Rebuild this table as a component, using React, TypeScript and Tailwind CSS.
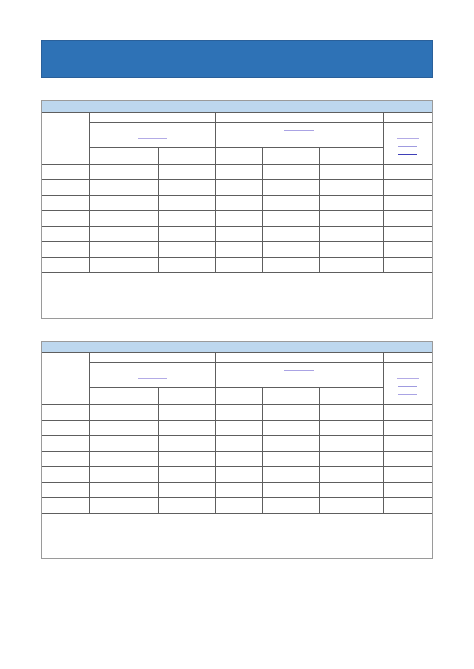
import React from "react";

const cell = "border border-[#5e5e5e] p-0";

function Line({ w, color, className = "" }: { w: string; color: string; className?: string }) {
  return <div className={`h-px mx-auto ${w} ${color} ${className}`} />;
}

function DataTable({ visited }: { visited: boolean }) {
  const rows = [0, 1, 2, 3, 4, 5, 6];
  return (
    <div className="border border-[#9a9a9a] w-[392px]">
      <table className="border-collapse border-hidden table-fixed w-[390px]">
        <colgroup>
          <col className="w-[47px]" />
          <col className="w-[69px]" />
          <col className="w-[57px]" />
          <col className="w-[47px]" />
          <col className="w-[57px]" />
          <col className="w-[64px]" />
          <col className="w-[49px]" />
        </colgroup>
        <tbody>
          <tr>
            <td colSpan={7} className={`${cell} h-[11px] bg-[#bdd7ee]`}></td>
          </tr>
          <tr>
            <td rowSpan={3} className={cell}></td>
            <td colSpan={2} className={`${cell} h-[10px]`}></td>
            <td colSpan={3} className={cell}></td>
            <td className={cell}></td>
          </tr>
          <tr>
            <td colSpan={2} className={`${cell} h-[25px] align-top`}>
              <div className="pt-[15px]">
                <Line w="w-[29px]" color="bg-[#b3abe6]" />
              </div>
            </td>
            <td colSpan={3} className={`${cell} align-top`}>
              <div className="pt-[7px]">
                <Line w="w-[30px]" color="bg-[#aaa3e4]" />
              </div>
            </td>
            <td rowSpan={2} className={`${cell} align-top`}>
              <div className="pt-[15px] flex flex-col gap-[7px]">
                <Line w="w-[22px]" color="bg-[#b3abe6]" />
                <Line w="w-[19px]" color="bg-[#9f9be0]" />
                <Line w="w-[19px]" color={visited ? "bg-[#a9a3e4]" : "bg-[#3f3fb8]"} />
              </div>
            </td>
          </tr>
          <tr>
            <td className={`${cell} h-[17px]`}></td>
            <td className={cell}></td>
            <td className={cell}></td>
            <td className={cell}></td>
            <td className={cell}></td>
          </tr>
          {rows.map((r) => (
            <tr key={r}>
              <td className={`${cell} h-[15.5px]`}></td>
              <td className={cell}></td>
              <td className={cell}></td>
              <td className={cell}></td>
              <td className={cell}></td>
              <td className={cell}></td>
              <td className={cell}></td>
            </tr>
          ))}
          <tr>
            <td colSpan={7} className={`${cell} h-[45px]`}></td>
          </tr>
        </tbody>
      </table>
    </div>
  );
}

export default function App() {
  return (
    <div className="w-[474px] h-[669px] bg-white pt-[40px] pl-[41px] font-['Liberation_Sans',sans-serif]">
      <div className="w-[392px] h-[38px] bg-[#2e72b6] border border-[#2a609a]"></div>
      <div className="mt-[22px]">
        <DataTable visited={false} />
      </div>
      <div className="mt-[22px]">
        <DataTable visited={true} />
      </div>
    </div>
  );
}
